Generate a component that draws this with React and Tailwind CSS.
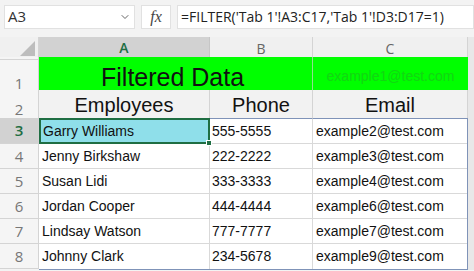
import { ChevronDown } from "lucide-react";

const rows = [
  ["Jenny Birkshaw", "222-2222", "example3@test.com"],
  ["Susan Lidi", "333-3333", "example4@test.com"],
  ["Jordan Cooper", "444-4444", "example6@test.com"],
  ["Lindsay Watson", "777-7777", "example7@test.com"],
  ["Johnny Clark", "234-5678", "example9@test.com"],
];

const cols = "grid grid-cols-[39px_171px_103px_155px_6px]";

const RowNum = ({ n, active, className = "" }) => (
  <div
    className={`flex justify-center border-r border-b border-[#d4d4d4] text-[15px] font-['Open_Sans'] ${
      active ? "bg-[#d2d2d2] text-[#1f6e43] font-semibold" : "bg-[#f5f5f5] text-[#777]"
    } ${className}`}
  >
    {n}
  </div>
);

export default function App() {
  return (
    <div className="w-[474px] h-[271px] overflow-hidden bg-[#f3f3f3] font-['Liberation_Sans',sans-serif]">
      {/* formula bar */}
      <div className="flex items-center h-[30px] pt-[3px] pl-[4px] gap-[6px]">
        <div className="flex items-center w-[131px] h-[24px] bg-white border border-[#e1e1e1] pl-[3px] pr-[3px] font-['Open_Sans'] text-[15px] text-[#333]">
          <span className="flex-1">A3</span>
          <ChevronDown size={12} className="text-[#666]" />
        </div>
        <div className="flex items-center justify-center w-[30px] h-[24px] bg-white border border-[#e1e1e1] font-['Liberation_Serif'] italic text-[16px] text-[#444]">
          fx
        </div>
        <div className="flex-1 flex items-center h-[24px] bg-white border border-[#e1e1e1] pl-[3px] font-['Open_Sans'] text-[14px] text-[#222] whitespace-nowrap overflow-hidden">
          =FILTER('Tab 1'!A3:C17,'Tab 1'!D3:D17=1)
        </div>
      </div>

      <div className="h-[7px]" />

      {/* column headers */}
      <div className={`${cols} h-[20px] bg-[#f0f0f0] font-['Open_Sans'] text-[14px] text-[#666]`}>
        <div className="relative border-r border-b border-[#d4d4d4]">
          <div className="absolute right-[3px] bottom-[3px] w-0 h-0 border-l-[15px] border-l-transparent border-b-[15px] border-b-[#bdbdbd]" />
        </div>
        <div className="flex justify-center items-center bg-[#d2d2d2] text-[#1f6e43] font-semibold border-b-2 border-[#1f6e43] border-r border-r-[#c6c6c6]">
          A
        </div>
        <div className="flex justify-center items-center border-r border-b border-[#d4d4d4]">B</div>
        <div className="flex justify-center items-center border-r border-b border-[#d4d4d4]">C</div>
        <div className="bg-[#e8e8e8]" />
      </div>

      {/* row 1 */}
      <div className={`${cols} h-[33px]`}>
        <RowNum n="1" className="items-end pb-[1px]" />
        <div className="col-span-2 bg-[#00ff00] flex items-center pl-[62px] pt-[2px] text-[25px] text-[#111] whitespace-nowrap border-r border-r-[#8fe08f]">
          Filtered Data
        </div>
        <div className="bg-[#00ff00] flex items-center justify-center text-[14px] text-[#12d612]">
          example1@test.com
        </div>
        <div className="bg-[#e8e8e8]" />
      </div>

      {/* row 2 */}
      <div className={`${cols} h-[28px]`}>
        <RowNum n="2" className="items-end" />
        <div className="bg-[#f2f2f2] flex items-center justify-center text-[20px] text-[#111] border-r border-b border-[#d4d4d4]">
          Employees
        </div>
        <div className="bg-[#f2f2f2] flex items-center justify-center text-[20px] text-[#111] border-r border-b border-[#d4d4d4]">
          Phone
        </div>
        <div className="bg-[#f2f2f2] flex items-center justify-center text-[20px] text-[#111] border-r border-b border-[#d4d4d4]">
          Email
        </div>
        <div className="bg-[#e8e8e8]" />
      </div>

      {/* data rows */}
      <div className="flex">
        <div className="flex flex-col w-[39px]">
          <RowNum n="3" active className="h-[26px] items-center" />
          {rows.map((r, i) => (
            <RowNum key={i} n={String(i + 4)} className="h-[25px] items-center" />
          ))}
        </div>
        <div className="flex flex-col w-[429px] bg-white border-b border-r border-[#7f93b8]">
          <div className="grid grid-cols-[171px_103px_1fr] h-[26px] text-[14px] text-[#111]">
            <div className="relative bg-[#8fdfea] border-2 border-[#1f6e43] flex items-center pl-[2px]">
              Garry Williams
              <div className="absolute -right-[4px] -bottom-[4px] w-[6px] h-[6px] bg-[#1f6e43] border border-white" />
            </div>
            <div className="flex items-center pl-[2px] border-t border-[#7f93b8] border-b border-b-[#d9d9d9] border-r border-r-[#d9d9d9]">
              555-5555
            </div>
            <div className="flex items-center pl-[3px] border-t border-[#7f93b8] border-b border-b-[#d9d9d9]">
              example2@test.com
            </div>
          </div>
          {rows.map((r, i) => (
            <div
              key={i}
              className={`grid grid-cols-[171px_103px_1fr] h-[25px] text-[14px] text-[#111] ${
                i < rows.length - 1 ? "border-b border-[#d9d9d9]" : ""
              }`}
            >
              <div className="flex items-center pl-[3px] border-r border-[#d9d9d9]">{r[0]}</div>
              <div className="flex items-center pl-[2px] border-r border-[#d9d9d9]">{r[1]}</div>
              <div className="flex items-center pl-[3px]">{r[2]}</div>
            </div>
          ))}
        </div>
        <div className="flex-1 bg-[#e8e8e8]" />
      </div>
    </div>
  );
}
